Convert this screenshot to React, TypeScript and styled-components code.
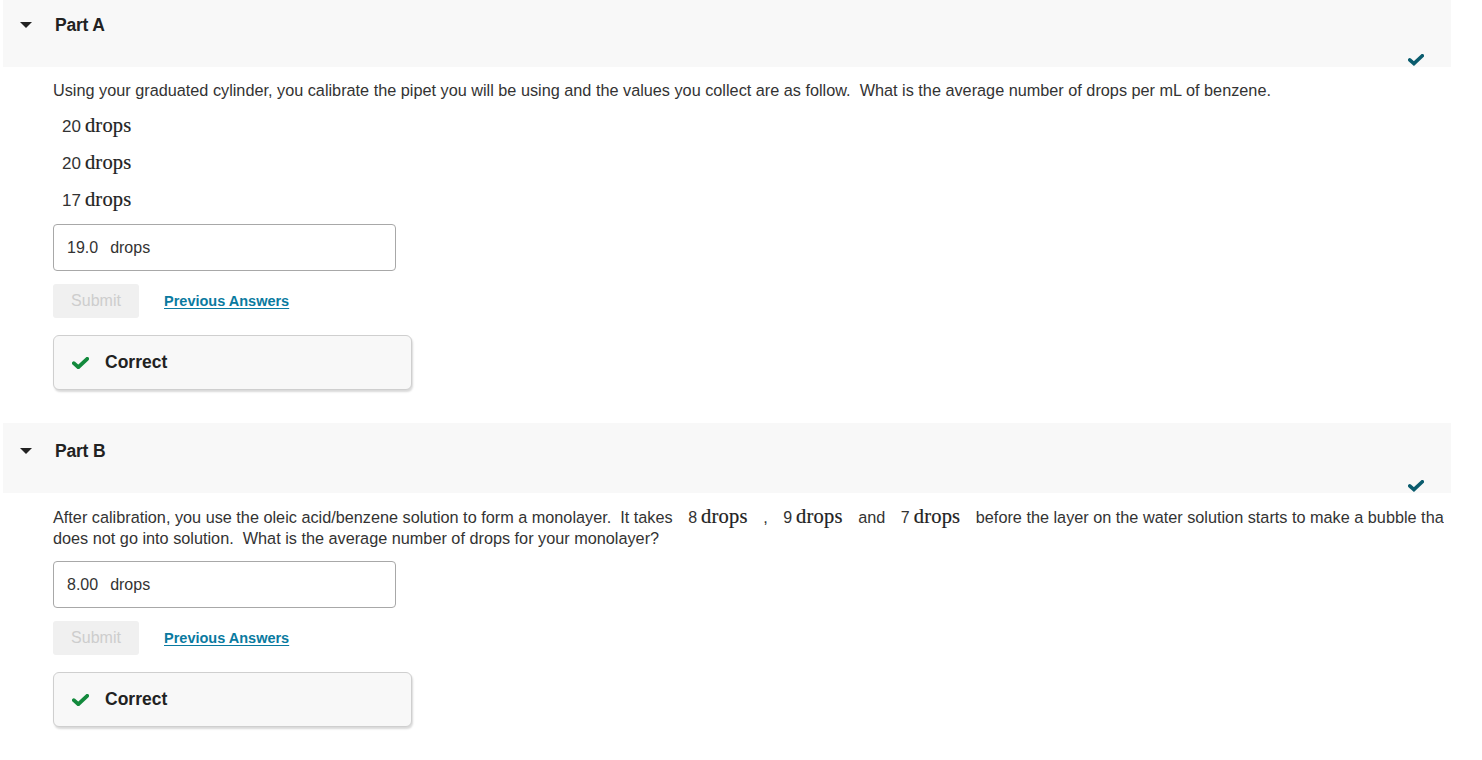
import React from "react";
import styled, { createGlobalStyle } from "styled-components";

const Global = createGlobalStyle`
  html, body { margin: 0; padding: 0; background: #fff; }
  body { font-family: "Liberation Sans", Arial, sans-serif; color: #333; }
`;

const Page = styled.div`
  margin-top: -3px;
  width: 1448px;
  margin-left: 3px;
`;

const Part = styled.section`
  display: flex;
  flex-direction: column;
`;

const Header = styled.div`
  height: 70px;
  box-sizing: border-box;
  background: #f8f8f8;
  padding: 0 27px 0 17px;
  display: grid;
  grid-template-rows: 56px 14px;
`;

const TitleRow = styled.div`
  display: flex;
  align-items: center;
  gap: 23px;
`;

const Caret = styled.span`
  width: 0;
  height: 0;
  border-left: 6px solid transparent;
  border-right: 6px solid transparent;
  border-top: 6px solid #222;
`;

const Title = styled.h2`
  margin: 0;
  font-size: 17.5px;
  font-weight: bold;
  color: #222;
  letter-spacing: -0.2px;
`;

const DoneMark = styled.span`
  justify-self: end;
  align-self: center;
  display: flex;
  color: #0b5c6e;
`;

const Body = styled.div`
  padding-left: 50px;
  margin-right: 7px;
  padding-bottom: 33px;
  overflow: hidden;
  display: flex;
  flex-direction: column;
  align-items: flex-start;
`;

const Prompt = styled.p<{ $after: number }>`
  margin: 13px 0 ${(p) => p.$after}px;
  font-size: 16.25px;
  line-height: 21px;
  white-space: pre;
  color: #333;
`;

const MathBlock = styled.div`
  display: flex;
  flex-direction: column;
  margin-bottom: 5px;
`;

const MathLine = styled.div`
  height: 37px;
  line-height: 37px;
  padding-left: 9px;
`;

const Num = styled.span`
  font-family: "Liberation Sans", Arial, sans-serif;
  font-size: 17px;
  color: #333;
  line-height: 1;
`;

const Unit = styled.span`
  font-family: "Liberation Serif", "Times New Roman", serif;
  font-size: 20.5px;
  color: #222;
  margin-left: 4px;
  letter-spacing: 0.2px;
  line-height: 1;
  -webkit-text-stroke: 0.2px #222;
`;

const InlineMath = styled.span`
  margin: 0 11px;
  line-height: 1;
`;

const InlineNum = styled(Num)`
  font-size: 16px;
`;

const AnswerField = styled.div`
  box-sizing: border-box;
  width: 343px;
  height: 47px;
  border: 1px solid #a8a8a8;
  border-radius: 4px;
  background: #fff;
  display: flex;
  align-items: center;
  gap: 12px;
  padding-left: 13px;
  font-size: 16px;
  color: #333;
`;

const Actions = styled.div`
  margin-top: 13px;
  display: flex;
  align-items: center;
  gap: 25px;
`;

const SubmitButton = styled.button`
  width: 86px;
  height: 34px;
  border: none;
  border-radius: 3px;
  background: #f0f0f0;
  color: #cdcdcd;
  font-family: "Liberation Sans", Arial, sans-serif;
  font-size: 16px;
  padding: 0;
  cursor: default;
`;

const PrevLink = styled.a`
  font-size: 14.5px;
  font-weight: bold;
  color: #0a7aa0;
  text-decoration: underline;
  text-underline-offset: 2px;
  cursor: pointer;
`;

const Feedback = styled.div`
  margin-top: 17px;
  box-sizing: border-box;
  width: 359px;
  height: 55px;
  border: 1px solid #cfcfcf;
  border-radius: 6px;
  background: #f8f8f8;
  box-shadow: 1px 2px 2px rgba(0, 0, 0, 0.15);
  display: flex;
  align-items: center;
  padding-left: 18px;
  gap: 16px;
`;

const FeedbackIcon = styled.span`
  display: flex;
  color: #138a3d;
`;

const FeedbackText = styled.span`
  font-size: 17.5px;
  font-weight: bold;
  color: #222;
`;

const CheckIcon = ({ w = 17 }: { w?: number }) => (
  <svg width={w} height={(w * 12) / 17} viewBox="0 0 17 12" fill="none">
    <path
      d="M1.8 6.2 L6.3 10.2 L15.2 1.8"
      stroke="currentColor"
      strokeWidth="3.8"
      strokeLinejoin="miter"
      strokeLinecap="round"
    />
  </svg>
);

const Qty = ({ n }: { n: string }) => (
  <InlineMath>
    <InlineNum>{n}</InlineNum>
    <Unit>drops</Unit>
  </InlineMath>
);

const PartHeader = ({ title }: { title: string }) => (
  <Header>
    <TitleRow>
      <Caret />
      <Title>{title}</Title>
    </TitleRow>
    <DoneMark>
      <CheckIcon w={16} />
    </DoneMark>
  </Header>
);

const Answer = ({ value }: { value: string }) => (
  <>
    <AnswerField>
      <span>{value}</span>
      <span>drops</span>
    </AnswerField>
    <Actions>
      <SubmitButton disabled>Submit</SubmitButton>
      <PrevLink>Previous Answers</PrevLink>
    </Actions>
    <Feedback>
      <FeedbackIcon>
        <CheckIcon w={17} />
      </FeedbackIcon>
      <FeedbackText>Correct</FeedbackText>
    </Feedback>
  </>
);

export default function App() {
  const calib = ["20", "20", "17"];
  return (
    <>
      <Global />
      <Page>
        <Part>
          <PartHeader title="Part A" />
          <Body>
            <Prompt $after={7}>
              {"Using your graduated cylinder, you calibrate the pipet you will be using and the values you collect are as follow.  What is the average number of drops per mL of benzene."}
            </Prompt>
            <MathBlock>
              {calib.map((n, i) => (
                <MathLine key={i}>
                  <Num>{n}</Num>
                  <Unit>drops</Unit>
                </MathLine>
              ))}
            </MathBlock>
            <Answer value="19.0" />
          </Body>
        </Part>
        <Part>
          <PartHeader title="Part B" />
          <Body>
            <Prompt $after={12}>
              {"After calibration, you use the oleic acid/benzene solution to form a monolayer.  It takes "}
              <Qty n="8" />
              {" , "}
              <Qty n="9" />
              {" and "}
              <Qty n="7" />
              {" before the layer on the water solution starts to make a bubble that"}
              <br />
              {"does not go into solution.  What is the average number of drops for your monolayer?"}
            </Prompt>
            <Answer value="8.00" />
          </Body>
        </Part>
      </Page>
    </>
  );
}
